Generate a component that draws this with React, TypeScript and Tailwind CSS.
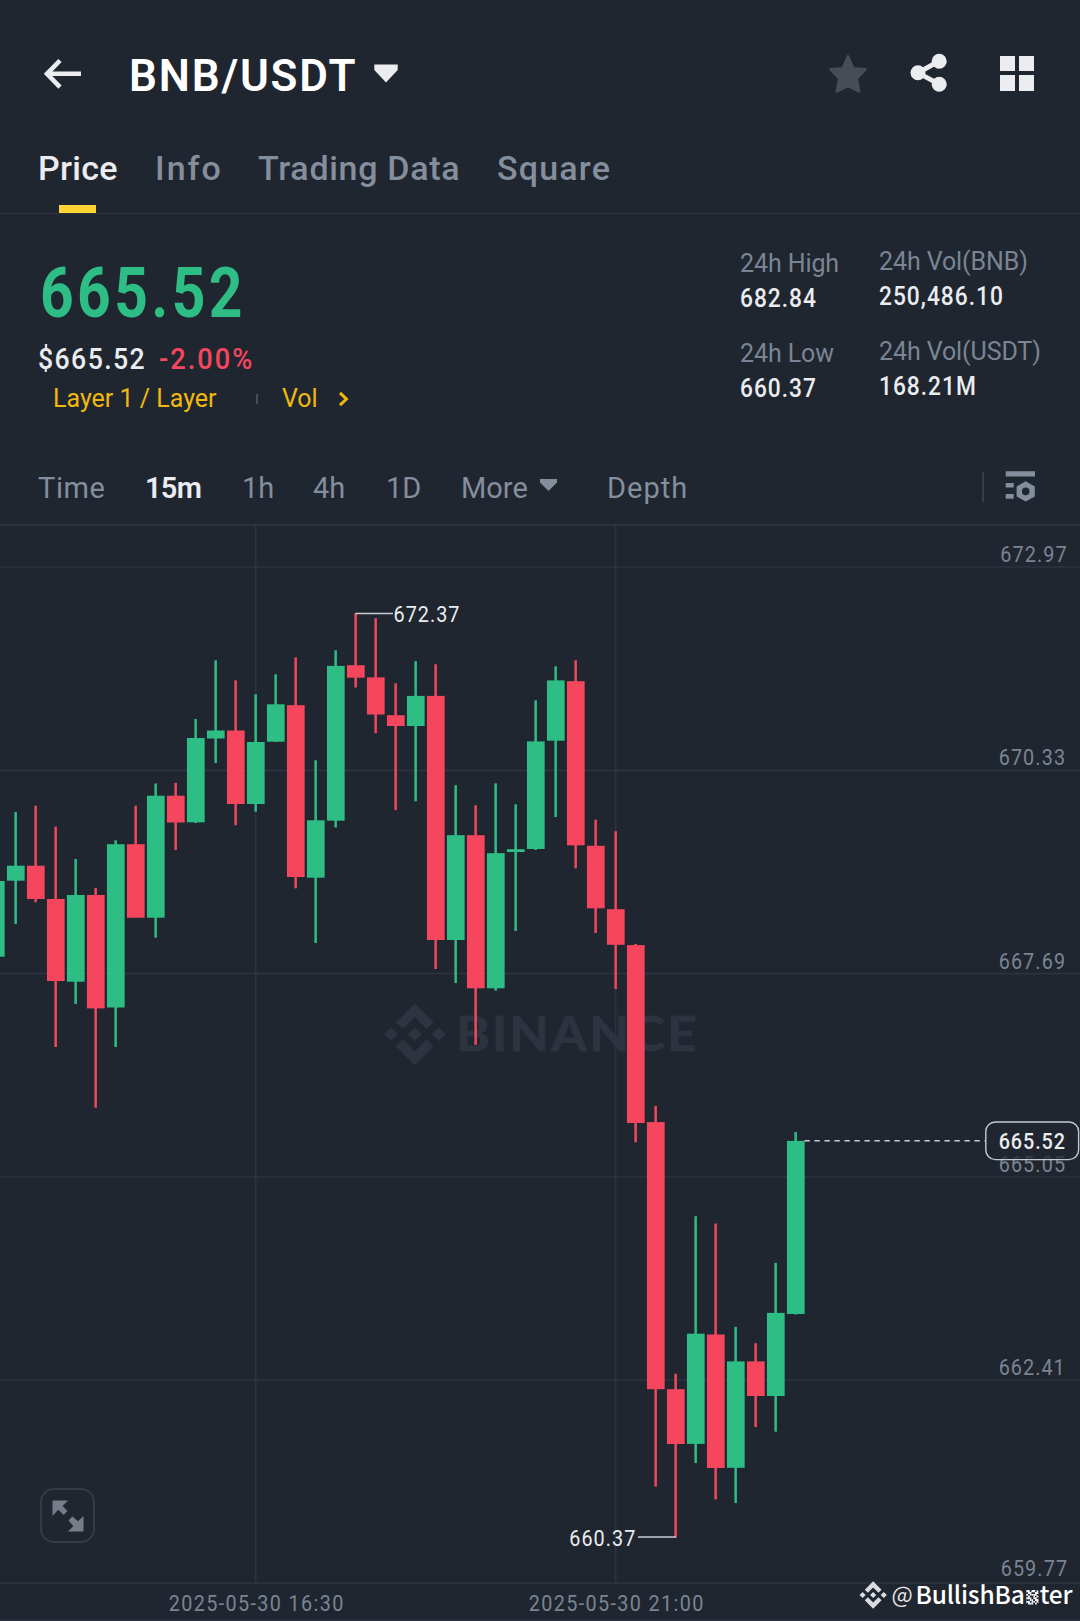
import React from "react";

type Candle = [high: number, top: number, bottom: number, low: number, up: 0 | 1];

const STEP = 20;
const FIRST_X = -4.35;

// Pixel values on the chart's vertical axis, oldest candle first.
const candles: Candle[] = [
  [881, 881, 956.7, 956.7, 1],
  [812, 865.7, 880.7, 924, 1],
  [805.7, 865.7, 899, 902.3, 0],
  [826.6, 899, 981, 1047, 0],
  [859, 895, 981.7, 1004, 1],
  [888, 895, 1008.4, 1107.7, 0],
  [840.3, 844.2, 1007.5, 1047, 1],
  [805.7, 844.2, 917.7, 917.7, 0],
  [783.5, 795.7, 917.7, 937.7, 1],
  [782.9, 795.7, 822.5, 850, 0],
  [719, 738, 822.3, 823, 1],
  [660.3, 730.5, 738.5, 763, 1],
  [680.3, 730.5, 804, 825.3, 0],
  [694.3, 742, 804, 811.7, 1],
  [674.3, 704.3, 741.7, 742, 1],
  [657.3, 705.2, 877, 888.3, 0],
  [760.3, 820.3, 877.7, 943, 1],
  [650.3, 665.9, 820.7, 827.5, 1],
  [613, 665.2, 677.7, 687.5, 0],
  [618.2, 677.4, 714.5, 733.2, 0],
  [683.2, 715.2, 726, 810, 0],
  [661.2, 695.9, 726, 801.3, 1],
  [664.2, 695.9, 940, 969, 0],
  [785.2, 835.2, 940, 983, 1],
  [805.2, 835.2, 988.3, 1044.7, 0],
  [783.3, 853.2, 988.3, 990.7, 1],
  [804.3, 849.2, 852, 931, 1],
  [700.3, 741.4, 849, 850, 1],
  [666.3, 680.4, 740.7, 817, 1],
  [660.3, 681.2, 845.3, 868.3, 0],
  [819.7, 845.8, 908.3, 933, 0],
  [831.2, 909.2, 944.8, 989, 0],
  [944, 945.1, 1123, 1142.3, 0],
  [1105.9, 1122.1, 1389.2, 1486.5, 0],
  [1373.8, 1389.2, 1444, 1537.5, 0],
  [1216.2, 1333.7, 1443.9, 1463, 1],
  [1223.5, 1334.5, 1468, 1499.4, 0],
  [1326.8, 1361.4, 1467.8, 1503, 1],
  [1343.2, 1361.4, 1396, 1427.1, 0],
  [1262.9, 1312.9, 1396, 1431.7, 1],
  [1132.1, 1140.9, 1314, 1314.6, 1],
];

const gridRows = [567, 770.4, 973.7, 1177, 1380, 1583.2];
const gridCols = [255.7, 615.6];

// Cells of the small mosaic that sits on the account name.
const mosaic = [
  "1101101",
  "0110011",
  "1011110",
  "0100101",
  "1110110",
  "0011011",
  "1101101",
  "0111010",
];

const BINANCE_PATH =
  "M16.624 13.9202l2.7175 2.7154-7.353 7.353-7.353-7.352 2.7175-2.7164 4.6355 4.6595 4.6356-4.6595zm4.6366-4.6366L24 12l-2.7154 2.7164L18.5682 12l2.6924-2.7164zm-9.272.001l2.7163 2.6914-2.7164 2.7174v-.001L9.2721 12l2.7164-2.7154zm-9.2722-.001L5.4088 12l-2.6914 2.6924L0 12l2.7164-2.7164zM11.9885.0115l7.353 7.329-2.7174 2.7154-4.6356-4.6356-4.6355 4.6595-2.7174-2.7154 7.353-7.353z";

const NARROW = 0.9;

// Chart figures use slightly condensed glyphs with open spacing.
function ChartText(props: { x: number; y: number; w: number; className?: string; children: string }) {
  return (
    <text
      transform={`translate(${props.x} ${props.y}) scale(${NARROW} 1)`}
      fontSize="22"
      textLength={props.w / NARROW}
      lengthAdjust="spacing"
      className={props.className}
    >
      {props.children}
    </text>
  );
}

function Header() {
  return (
    <header className="flex h-[149px] items-center">
      <svg className="mb-0.5 ml-[43px] h-8 w-10" viewBox="0 0 40 32" fill="none" stroke="#eaecef" strokeWidth="4.6">
        <path d="M38 15.8H5" />
        <path d="M17 2.5L4 15.8L17 29.1" />
      </svg>
      <h1 className="mt-0.5 ml-[46px] w-[245px] text-[44px] leading-none font-semibold tracking-[1.8px] whitespace-nowrap text-white">
        BNB/USDT
      </h1>
      <svg className="mb-[3px] h-[19px] w-6" viewBox="0 0 24 19" fill="#eaecef">
        <path d="M0.3 0.5H23.7V6L12 18.6L0.3 6Z" />
      </svg>
      <div className="mb-0.5 ml-auto flex items-center">
        <svg className="mr-[43px] h-10 w-[38px]" viewBox="0 0 38 40" fill="#474d57" stroke="#474d57" strokeWidth="3" strokeLinejoin="round">
          <path d="M19 2.6L24 14.4L36 15.4L27.5 24.4L30 37.2L19 31.6L8 37.2L10.5 24.4L2 15.4L14 14.4Z" />
        </svg>
        <svg className="mr-[53px] mb-px h-10 w-[37px]" viewBox="0 0 37 40" fill="#eaecef">
          <path d="M29 8.2L8 19.8L29 31.2" fill="none" stroke="#eaecef" strokeWidth="4.8" />
          <circle cx="29.2" cy="8.2" r="7.5" />
          <circle cx="8" cy="19.8" r="7.5" />
          <circle cx="29.2" cy="31.2" r="7.5" />
        </svg>
        <div className="mr-[46px] mb-px grid h-[35px] w-[34px] grid-cols-2 gap-1">
          <i className="bg-[#eaecef]" />
          <i className="bg-[#eaecef]" />
          <i className="bg-[#eaecef]" />
          <i className="bg-[#eaecef]" />
        </div>
      </div>
    </header>
  );
}

function Tabs() {
  return (
    <nav className="flex h-[65px] border-b border-[#2d333e] pl-[38px] text-[34px] leading-[39px] font-medium whitespace-nowrap text-[#848e9c]">
      <span className="relative w-[117px] tracking-[0.3px] text-[#eaecef]">
        Price
        <i className="absolute bottom-0 left-[21px] h-2 w-[37px] bg-[#fcd535]" />
      </span>
      <span className="w-[103px] tracking-[2px]">Info</span>
      <span className="w-[239px] tracking-[0.7px]">Trading Data</span>
      <span className="tracking-[1.2px]">Square</span>
    </nav>
  );
}

function Stat({ label, value }: { label: string; value: string }) {
  return (
    <div className="h-[90px] whitespace-nowrap">
      <div className="text-[25px] leading-[30px] tracking-[-0.1px] text-[#7b8492]">{label}</div>
      <div className="mt-[5px] origin-left scale-x-[0.91] text-[25px] leading-[30px] font-medium tracking-[1.1px] text-[#eaecef]">
        {value}
      </div>
    </div>
  );
}

function Summary() {
  return (
    <section className="flex h-[236px]">
      <div className="w-[740px] pt-[49px] whitespace-nowrap">
        <div className="ml-10 origin-left scale-x-[0.84] text-[70px] leading-[60px] font-bold tracking-[4px] text-[#2ebd85]">
          665.52
        </div>
        <div className="mt-[21px] flex pl-[38px] text-[29px] leading-[30px] font-medium">
          <div className="w-[121px] text-[#eaecef]">
            <div className="origin-left scale-x-[0.92] tracking-[1.5px]">$665.52</div>
          </div>
          <div className="origin-left scale-x-[0.94] tracking-[2.1px] text-[#f6465d]">-2.00%</div>
        </div>
        <div className="mt-3 flex items-center pl-[53px] text-[25px] leading-[26px] text-[#f0b90b]">
          <span className="w-[203px]">Layer 1 / Layer</span>
          <i className="mr-6 h-2.5 w-0.5 bg-[#474d57]" />
          <span className="w-[56px]">Vol</span>
          <svg className="h-4 w-3" viewBox="0 0 12 16" fill="none" stroke="#f0b90b" strokeWidth="3">
            <path d="M2 1.8L8.4 8L2 14.2" />
          </svg>
        </div>
      </div>
      <div className="w-[139px] pt-[35px]">
        <Stat label="24h High" value="682.84" />
        <Stat label="24h Low" value="660.37" />
      </div>
      <div className="pt-[33px]">
        <Stat label="24h Vol(BNB)" value="250,486.10" />
        <Stat label="24h Vol(USDT)" value="168.21M" />
      </div>
    </section>
  );
}

function Intervals() {
  return (
    <nav className="flex h-[76px] items-center border-b-2 border-[#2d333e] pl-[38px] text-[29px] leading-[34px] whitespace-nowrap text-[#848e9c]">
      <span className="mt-0.5 w-[107px] tracking-[0.6px]">Time</span>
      <span className="mt-0.5 w-[97px] font-semibold tracking-[-0.7px] text-[#eaecef]">15m</span>
      <span className="mt-0.5 w-[71px]">1h</span>
      <span className="mt-0.5 w-[73px]">4h</span>
      <span className="mt-0.5 w-[75px]">1D</span>
      <span className="mt-0.5 w-[79px]">More</span>
      <svg className="mb-1 h-3 w-[18px]" viewBox="0 0 18 12" fill="#848e9c">
        <path d="M0 0H17V3.6L8.5 12L0 3.6Z" />
      </svg>
      <span className="mt-0.5 ml-[49px] tracking-[1px]">Depth</span>
      <i className="ml-auto h-[30px] w-0.5 bg-[#373e4a]" />
      <svg className="mr-11 mb-0.5 ml-[21px] h-[31px] w-[31px]" viewBox="0 0 31 31" fill="#848e9c">
        <path d="M0.7 0.3H30V5.6H0.7zM0.7 12H8.7V16.6H0.7zM0.7 23H8.7V27.8H0.7z" />
        <path fillRule="evenodd" d="M20.7 10.3L29.8 15.4V25.4L20.7 30.6L11.6 25.4V15.4ZM20.7 16.6a3.8 3.8 0 1 0 0 7.6a3.8 3.8 0 1 0 0-7.6Z" />
      </svg>
    </nav>
  );
}

function Chart() {
  return (
    <section className="relative h-[1095px]">
      <svg className="block h-[1095px] w-[1080px]" viewBox="0 526 1080 1095">
        <g stroke="#2d333e" strokeWidth="1.7">
          {gridRows.map((y) => (
            <line key={y} x1="0" x2="1080" y1={y} y2={y} />
          ))}
          {gridCols.map((x) => (
            <line key={x} x1={x} x2={x} y1="526" y2="1583" />
          ))}
          <line x1="0" x2="1080" y1="1620.4" y2="1620.4" />
        </g>

        <g fill="#2d333f">
          <path transform="translate(384 1003.4) scale(2.57)" d={BINANCE_PATH} />
          <text
            transform="translate(456 1051) scale(1.08 1)"
            fontSize="47.5"
            textLength="223"
            className="font-['Lato'] font-bold"
            stroke="#2d333f"
            strokeWidth="1"
          >
            BINANCE
          </text>
        </g>

        {candles.map(([high, top, bottom, low, up], i) => {
          const cx = FIRST_X + i * STEP;
          return (
            <g key={i} fill={up ? "#2ebd85" : "#f6465d"}>
              <rect x={cx - 1.25} y={high} width="2.5" height={low - high} />
              <rect x={cx - 8.7} y={top} width="17.7" height={bottom - top} />
            </g>
          );
        })}

        <g stroke="#c9cdd3" strokeWidth="1.5">
          <line x1="355.5" x2="393" y1="613.4" y2="613.4" />
          <line x1="638" x2="676" y1="1537" y2="1537" />
          <line x1="804.5" x2="985" y1="1140.7" y2="1140.7" strokeDasharray="5.3 4.7" />
        </g>
        <ChartText x={393.5} y={622} w={66} className="fill-[#eaecef]">672.37</ChartText>
        <ChartText x={569.3} y={1546} w={66} className="fill-[#eaecef]">660.37</ChartText>

        <g className="fill-[#7b8492]">
          <ChartText x={1000.3} y={562.3} w={66.3}>672.97</ChartText>
          <ChartText x={998.7} y={765.3} w={66.3}>670.33</ChartText>
          <ChartText x={998.7} y={968.7} w={66.3}>667.69</ChartText>
          <ChartText x={998.7} y={1172} w={66.3}>665.05</ChartText>
          <ChartText x={998.7} y={1375} w={66}>662.41</ChartText>
          <ChartText x={1000.7} y={1576} w={66.3}>659.77</ChartText>
          <ChartText x={168.7} y={1611} w={174.6}>2025-05-30 16:30</ChartText>
          <ChartText x={528.7} y={1611} w={174.6}>2025-05-30 21:00</ChartText>
        </g>

        <rect x="985.8" y="1122" width="92.8" height="37.6" rx="9.5" fill="#202630" fillOpacity="0.75" stroke="#c5c9d0" strokeWidth="1.4" />
        <ChartText x={998.7} y={1149} w={66.3} className="fill-[#eaecef] font-medium">665.52</ChartText>

        <path transform="translate(859.5 1581.3) scale(1.14)" d={BINANCE_PATH} fill="#dcdce0" />
        <text x="891.5" y="1603" fontSize="22.5" className="fill-[#e2e3e6] font-['Noto_Sans_CJK_SC',sans-serif]">
          @
        </text>
        <text x="915.5" y="1604" fontSize="24.5" textLength="157" className="fill-white font-['Noto_Sans_CJK_SC',sans-serif] font-medium">
          BullishBanter
        </text>
        <g transform="translate(1026.5 1590.5)">
          {mosaic.flatMap((row, r) =>
            [...row].map((cell, c) => (
              <rect
                key={`${r}-${c}`}
                x={c * 1.7}
                y={r * 1.75}
                width="1.7"
                height="1.75"
                fill={cell === "1" ? "#f5f6f7" : "#202630"}
              />
            )),
          )}
        </g>
      </svg>
      <button className="absolute bottom-[78px] left-10 flex size-[55px] items-center justify-center rounded-[14px] border-2 border-[#343a46]">
        <svg className="size-8" viewBox="0 0 32 32" fill="#767d89">
          <path d="M0.5 0.5H16L10.6 5.9L15.5 11L11.6 15L6.2 9.8L0.5 16ZM31.5 31.5V16L26 21.2L20.4 16.4L16.4 20.4L21.4 26L16 31.5Z" />
        </svg>
      </button>
    </section>
  );
}

export default function App() {
  return (
    <main className="w-[1080px] bg-[#202630] font-['Roboto','Liberation_Sans',sans-serif]">
      <Header />
      <Tabs />
      <Summary />
      <Intervals />
      <Chart />
    </main>
  );
}
